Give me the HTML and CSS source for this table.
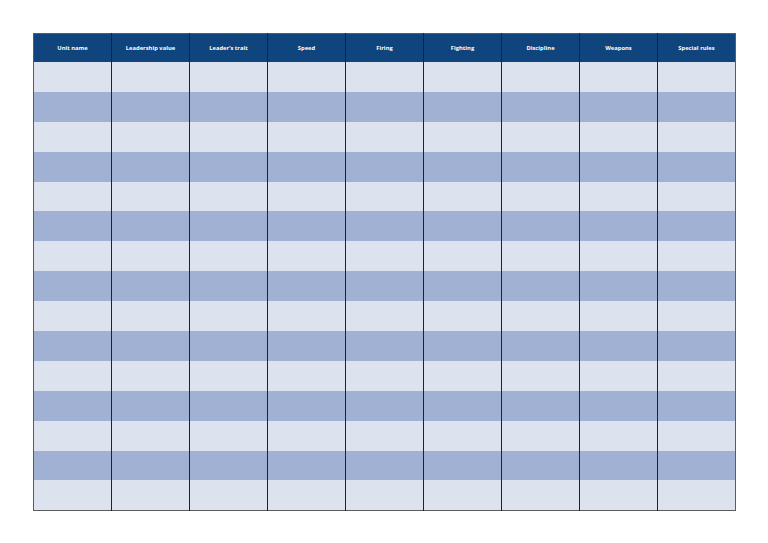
FILE: index.html
```html
<!DOCTYPE html>
<html>
<head>
<meta charset="utf-8">
<link rel="stylesheet" href="styles.css">
</head>
<body>
<table class="sheet">
<thead>
<tr><th>Unit name</th><th>Leadership value</th><th>Leader’s trait</th><th>Speed</th><th>Firing</th><th>Fighting</th><th>Discipline</th><th>Weapons</th><th>Special rules</th></tr>
</thead>
<tbody>
<tr class="light"><td></td><td></td><td></td><td></td><td></td><td></td><td></td><td></td><td></td></tr>
<tr class="dark"><td></td><td></td><td></td><td></td><td></td><td></td><td></td><td></td><td></td></tr>
<tr class="light"><td></td><td></td><td></td><td></td><td></td><td></td><td></td><td></td><td></td></tr>
<tr class="dark"><td></td><td></td><td></td><td></td><td></td><td></td><td></td><td></td><td></td></tr>
<tr class="light"><td></td><td></td><td></td><td></td><td></td><td></td><td></td><td></td><td></td></tr>
<tr class="dark"><td></td><td></td><td></td><td></td><td></td><td></td><td></td><td></td><td></td></tr>
<tr class="light"><td></td><td></td><td></td><td></td><td></td><td></td><td></td><td></td><td></td></tr>
<tr class="dark"><td></td><td></td><td></td><td></td><td></td><td></td><td></td><td></td><td></td></tr>
<tr class="light"><td></td><td></td><td></td><td></td><td></td><td></td><td></td><td></td><td></td></tr>
<tr class="dark"><td></td><td></td><td></td><td></td><td></td><td></td><td></td><td></td><td></td></tr>
<tr class="light"><td></td><td></td><td></td><td></td><td></td><td></td><td></td><td></td><td></td></tr>
<tr class="dark"><td></td><td></td><td></td><td></td><td></td><td></td><td></td><td></td><td></td></tr>
<tr class="light"><td></td><td></td><td></td><td></td><td></td><td></td><td></td><td></td><td></td></tr>
<tr class="dark"><td></td><td></td><td></td><td></td><td></td><td></td><td></td><td></td><td></td></tr>
<tr class="light"><td></td><td></td><td></td><td></td><td></td><td></td><td></td><td></td><td></td></tr>
</tbody>
</table>
</body>
</html>
```
FILE: styles.css
```css
html, body {
  margin: 0;
  padding: 0;
  background: #ffffff;
}

.sheet {
  margin: 33px 0 0 33px;
  width: 703px;
  table-layout: fixed;
  border-collapse: collapse;
  border-top: 1px solid #5c5c5c;
  border-bottom: 1px solid #5c5c5c;
  font-family: "Open Sans", "Liberation Sans", sans-serif;
}

.sheet th,
.sheet td {
  padding: 0;
  border-left: 1px solid #1f2330;
  border-right: 1px solid #1f2330;
  border-top: none;
  border-bottom: none;
}

.sheet th:first-child,
.sheet td:first-child {
  border-left-color: #5c5c5c;
}

.sheet th:last-child,
.sheet td:last-child {
  border-right-color: #5c5c5c;
}

.sheet th {
  height: 28px;
  background: #0f447c;
  color: #ffffff;
  font-size: 5.8px;
  font-weight: 700;
  text-align: center;
  vertical-align: middle;
}

.sheet td {
  height: 29.9px;
}

.light td {
  background: #dce2ee;
}

.dark td {
  background: #a0b1d3;
}
```
